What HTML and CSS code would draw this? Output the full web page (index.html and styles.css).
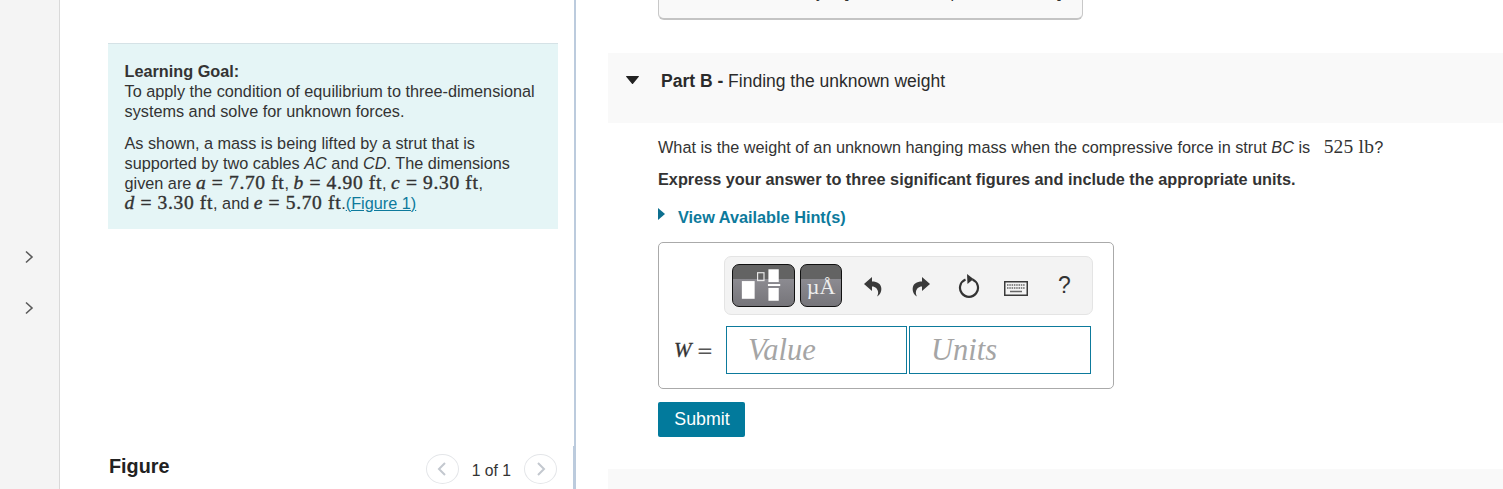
FILE: index.html
```html
<!DOCTYPE html>
<html lang="en">
<head>
<meta charset="utf-8">
<title>Part B - Finding the unknown weight</title>
<link rel="stylesheet" href="styles.css">
</head>
<body>
<div class="page">
  <nav class="rail">
    <svg class="rail-arrow" width="10" height="14" viewBox="0 0 10 14"><path d="M2 1.500 8 7 2 12.500" fill="none" stroke="#5a5a5a" stroke-width="1.600"/></svg>
    <svg class="rail-arrow" width="10" height="14" viewBox="0 0 10 14"><path d="M2 1.500 8 7 2 12.500" fill="none" stroke="#5a5a5a" stroke-width="1.600"/></svg>
  </nav>
  <aside class="left">
    <section class="goal">
      <p class="goal-p"><b>Learning Goal:</b><br>To apply the condition of equilibrium to three-dimensional systems and solve for unknown forces.</p>
      <p class="goal-p goal-second">As shown, a mass is being lifted by a strut that is supported by two cables <i>AC</i> and <i>CD</i>. The dimensions given are <span class="m"><i>a</i> = 7.70 ft</span>, <span class="m"><i>b</i> = 4.90 ft</span>, <span class="m"><i>c</i> = 9.30 ft</span>,<br><span class="m"><i>d</i> = 3.30 ft</span>, and <span class="m"><i>e</i> = 5.70 ft</span>.<a class="fig-link" href="#">(<u>Figure 1</u>)</a></p>
    </section>
    <div class="figure-bar">
      <h2 class="figure-title">Figure</h2>
      <div class="pager">
        <span class="pager-btn"><svg width="12" height="16" viewBox="0 0 12 16"><path d="M9 2 3 8l6 6" fill="none" stroke="#c3c8cf" stroke-width="2"/></svg></span>
        <span class="pager-text">1 of 1</span>
        <span class="pager-btn"><svg width="12" height="16" viewBox="0 0 12 16"><path d="m3 2 6 6-6 6" fill="none" stroke="#c3c8cf" stroke-width="2"/></svg></span>
      </div>
    </div>
  </aside>
  <main class="right">
    <div class="prev-card"><span class="clip clip-1">y</span><span class="clip clip-2">[</span><span class="clip clip-3">p</span><span class="clip clip-4">]</span></div>
    <header class="part-head">
      <svg class="caret" width="13" height="8" viewBox="0 0 13 8"><path d="M.5 0h12a.5.500 0 0 1 .3.800L7 7.800a.6.600 0 0 1-1 0L.2.800A.5.500 0 0 1 .5 0z" fill="#222"/></svg>
      <h1 class="part-title"><b>Part B -</b> Finding the unknown weight</h1>
    </header>
    <div class="part-body">
      <p class="question">What is the weight of an unknown hanging mass when the compressive force in strut <i>BC</i> is <span class="m q-val">525 lb</span>?</p>
      <p class="instruct">Express your answer to three significant figures and include the appropriate units.</p>
      <div class="hints">
        <svg width="7" height="12" viewBox="0 0 7 12"><path d="M0 0l7 6-7 6z" fill="#0d6f8f"/></svg>
        <a class="hint-link" href="#">View Available Hint(s)</a>
      </div>
      <div class="answer">
        <div class="toolbar">
          <span class="tool tool-wide">
            <svg width="62" height="42" viewBox="0 0 62 42"><rect x="9" y="16" width="13" height="18" fill="#fff"/><rect x="25" y="7.500" width="6.500" height="8" fill="none" stroke="#e8e8e8" stroke-width="1.200"/><rect x="36" y="4" width="10.500" height="13" fill="#fff"/><rect x="35.500" y="19" width="12.500" height="2" fill="#fff"/><rect x="36" y="23" width="10.500" height="13" fill="#fff"/></svg>
          </span>
          <span class="tool tool-unit">µÅ</span>
          <span class="tools">
            <svg class="t-undo" width="18" height="20" viewBox="0 0 18 20"><path d="M8 0 0 7l8 7V9.500c3.500 0 5.500 2.500 6 5 .3 1.800 0 3.500-1 5 3.500-2 4.800-5.500 4.200-9C16.600 7 13.500 4.500 8 4.500z" fill="#3a3a3a"/></svg>
            <svg class="t-redo" width="18" height="20" viewBox="0 0 18 20"><path d="M10 0l8 7-8 7V9.500c-3.500 0-5.500 2.500-6 5-.3 1.800 0 3.500 1 5-3.500-2-4.800-5.500-4.200-9C1.400 7 4.500 4.500 10 4.500z" fill="#3a3a3a"/></svg>
            <svg class="t-reset" width="22" height="24" viewBox="0 0 22 24"><path d="M7.500 5.500A9 9 0 1 0 14.500 5.500" fill="none" stroke="#333" stroke-width="2.200"/><path d="M9 0l6.500 5L9.500 10z" fill="#333"/></svg>
            <svg class="t-keys" width="24" height="15" viewBox="0 0 24 15"><rect x=".75" y=".75" width="22.500" height="13.500" fill="#f4f4f4" stroke="#3a3a3a" stroke-width="1.500"/><path d="M3 4h18M3 7h18" stroke="#666" stroke-width="1.500" stroke-dasharray="1.500 .8"/><path d="M6 10.500h12" stroke="#666" stroke-width="1.500"/></svg>
            <span class="help">?</span>
          </span>
        </div>
        <div class="entry">
          <span class="var"><i>W</i><span class="eq">=</span></span>
          <span class="field">Value</span>
          <span class="field field-units">Units</span>
        </div>
      </div>
      <button class="submit" type="button">Submit</button>
    </div>
    <div class="next-part"></div>
  </main>
</div>
</body>
</html>
```
FILE: styles.css
```css
* { box-sizing: border-box; }
html, body { margin: 0; height: 100%; }
body { font-family: "Liberation Sans", Arial, sans-serif; color: #333; background: #fff; overflow: hidden; }
p, h1, h2 { margin: 0; font-weight: normal; }

.page { display: flex; height: 489px; overflow: hidden; }

.rail { width: 60px; flex: none; background: #f4f4f4; border-right: 1px solid #d9d9d9; padding: 250px 0 0 24px; display: flex; flex-direction: column; gap: 37px; }
.rail-arrow { display: block; }

.left { position: relative; width: 516px; flex: none; border-right: 2px solid #bccbdd; padding: 43px 16px 0 48px; display: flex; flex-direction: column; }
.left::after { content: ""; position: absolute; right: 0; top: 446px; bottom: 0; width: 1px; background: #bccbdd; }
.goal { height: 186px; background: #e5f5f6; border-top: 1px solid #d5e2e6; padding: 17px 16px 0 16.500px; font-size: 16.250px; line-height: 20px; }
.goal-second { margin-top: 12px; }
.goal-p { width: 425px; }
.m { font-family: "Liberation Serif", serif; font-size: 19.500px; line-height: 1; font-weight: normal; -webkit-text-stroke: .4px #333; letter-spacing: .65px; white-space: nowrap; color: #333; }
.fig-link { color: #0d7a9c; }
.figure-bar { margin-top: 221px; display: flex; align-items: center; justify-content: space-between; height: 32px; }
.figure-title { font-size: 19.800px; font-weight: bold; color: #222; padding-left: 1px; }
.pager { display: flex; align-items: center; gap: 13px; margin-right: 1px; margin-top: 6px; }
.pager-btn { width: 33px; height: 30px; border: 1px solid #e4e6e9; border-radius: 50%; display: flex; align-items: center; justify-content: center; }
.pager-text { font-size: 15.700px; color: #333; padding-top: 4px; }

.right { flex: 1; padding-left: 32px; min-width: 0; display: flex; flex-direction: column; }
.prev-card { width: 425px; height: 20px; margin-left: 50px; flex: none; overflow: hidden; display: flex; align-items: flex-start; background: #f9f9f9; border: 1px solid #c8c8c8; border-top: 0; border-bottom: 2px solid #c4c4c4; border-radius: 0 0 6px 6px; }
.clip { font-size: 16px; line-height: 16px; margin-top: -15px; color: #333; }
.clip-1 { margin-left: 157px; }
.clip-2 { margin-left: 20px; }
.clip-3 { margin-left: 102px; }
.clip-4 { margin-left: 98px; }
.part-head { margin-top: 33px; height: 70px; flex: none; background: #f9f9f9; padding: 18px 0 0 18px; display: flex; align-items: flex-start; }
.caret { margin-top: 5px; flex: none; }
.part-title { margin-left: 22px; font-size: 17.500px; line-height: 20px; color: #2b2b2b; }
.part-body { padding: 13px 0 0 50px; flex: none; }
.question { font-size: 16.250px; line-height: 22px; }
.q-val { -webkit-text-stroke: 0; margin-left: 9px; letter-spacing: .2px; }
.instruct { margin-top: 10px; font-size: 16.250px; line-height: 22px; font-weight: bold; }
.hints { margin-top: 16px; height: 22px; display: flex; align-items: flex-start; gap: 13px; }
.hints svg { margin-top: 2px; }
.hint-link { font-size: 16.300px; line-height: 22px; font-weight: bold; color: #0d7a9c; text-decoration: none; }
.answer { margin-top: 14px; width: 456px; height: 147px; border: 1px solid #aaa; border-radius: 5px; padding: 13px 20px 0 15px; }
.toolbar { margin-left: 50px; height: 59px; background: #f3f3f3; border: 1px solid #e4e4e4; border-radius: 7px; padding: 7px 0 0 7px; display: flex; align-items: flex-start; gap: 5px; }
.tool { height: 43px; border: 1px solid #111; border-radius: 7px; background: linear-gradient(#636363 0 14px, #8c8b91 14px, #76757a 100%); display: flex; align-items: center; justify-content: center; color: #eee; }
.tool-wide { width: 63px; }
.tool-unit { width: 42px; font-family: "Liberation Serif", serif; font-size: 22px; padding-top: 3px; }
.tools { display: flex; align-items: center; height: 43px; margin-left: 17px; }
.t-redo { margin-left: 30px; }
.t-reset { margin-left: 28px; margin-top: 1px; }
.t-keys { margin-left: 24px; margin-top: 5px; }
.t-undo, .t-redo { margin-top: 3px; }
.help { font-size: 23px; color: #333; margin-left: 30px; width: 13px; }
.entry { margin-top: 11px; display: flex; align-items: center; gap: 2px; }
.var { width: 50px; font-family: "Liberation Serif", serif; font-size: 21px; font-weight: normal; -webkit-text-stroke: .3px #333; color: #333; white-space: nowrap; }
.eq { font-family: "DejaVu Sans", sans-serif; font-size: 20px; margin-left: 5px; color: #555; -webkit-text-stroke: 0; }
.field { width: 181px; height: 48px; border: 1px solid #0d7a9c; padding-left: 21px; font-family: "Liberation Serif", serif; font-style: italic; font-size: 30.500px; line-height: 46px; color: #a5a5a5; }
.field-units { width: 182px; }
.submit { display: block; margin-top: 13px; width: 87px; height: 35px; padding: 0 0 0 1px; border: 0; border-radius: 2px; background: #027a9c; color: #fff; font-family: "Liberation Sans", Arial, sans-serif; font-size: 17.800px; }
.next-part { margin-top: 32px; height: 40px; flex: none; background: #f9f9f9; }
```
